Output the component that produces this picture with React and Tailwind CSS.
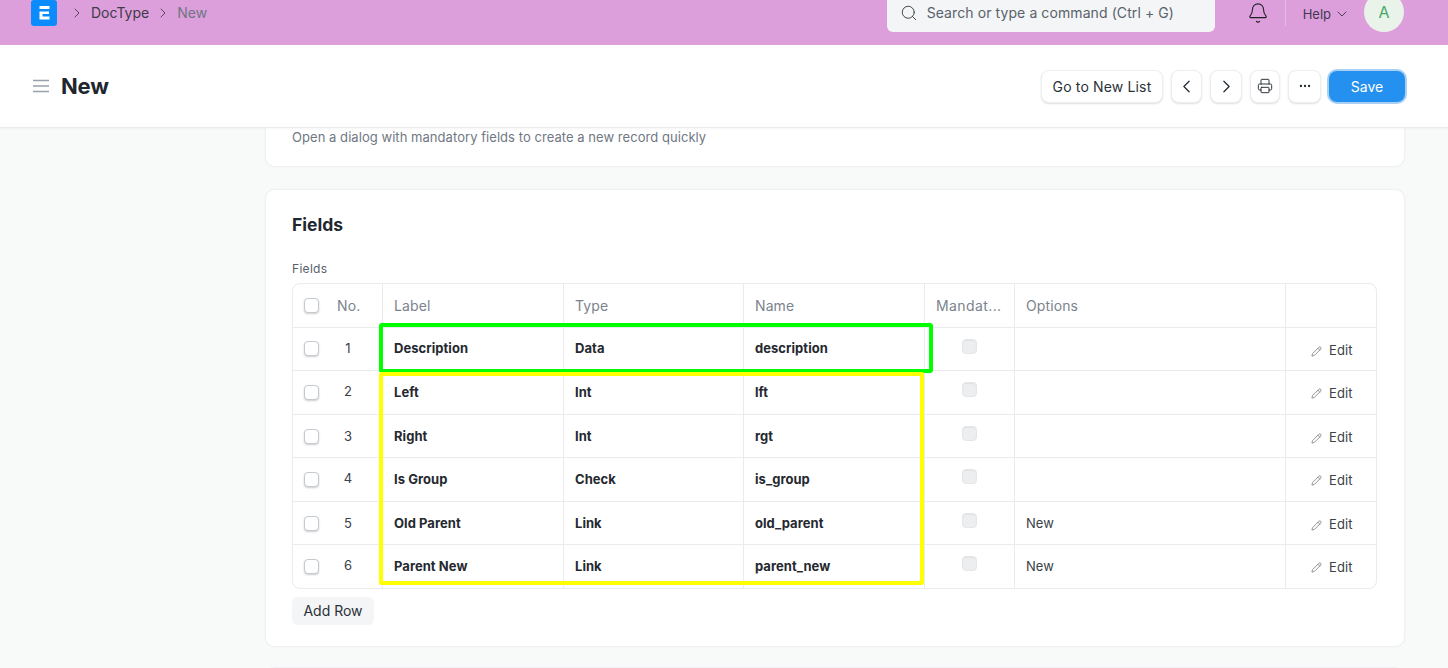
import React from "react";
import { ChevronRight, ChevronLeft, ChevronDown, Search, Bell, Printer, Ellipsis, Pencil } from "lucide-react";

const rows = [
  ["1", "Description", "Data", "description", "", false],
  ["2", "Left", "Int", "lft", "", false],
  ["3", "Right", "Int", "rgt", "", true],
  ["4", "Is Group", "Check", "is_group", "", false],
  ["5", "Old Parent", "Link", "old_parent", "New", true],
  ["6", "Parent New", "Link", "parent_new", "New", false],
];

function Box({ disabled }) {
  return (
    <span
      className={
        disabled
          ? "block w-[15px] h-[15px] rounded-[4px] bg-[#edeeef] border border-[#e4e6e8] shadow-[inset_0_1px_1px_rgba(0,0,0,0.05)]"
          : "block w-[15px] h-[15px] rounded-[4px] bg-white border border-[#c5cad0] shadow-[0_1px_2px_rgba(0,0,0,0.2)]"
      }
    />
  );
}

function IconBtn({ children, w }) {
  return (
    <button className={`h-[33px] ${w} flex items-center justify-center rounded-[8px] bg-white border border-[#eceef0] shadow-[0_1px_2px_rgba(0,0,0,0.13)] text-[#1f272e]`}>
      {children}
    </button>
  );
}

export default function App() {
  return (
    <div className="w-[1448px] h-[668px] overflow-hidden bg-[#f8f9f9] font-['Inter',sans-serif] text-[#1f272e] flex flex-col">
      <div className="h-[45px] shrink-0 bg-[#dd9fdc] flex items-start pl-[31px]">
        <div className="w-[26px] h-[26px] rounded-[3px] bg-[#0a8cff] flex items-center justify-center">
          <svg width="11" height="14" viewBox="0 0 11 14">
            <path d="M0.5 0H10.5V3H0.5ZM0.5 5.5H10V8H3.5V10.5H10.5V13.5H0.5Z" fill="#fff" />
          </svg>
        </div>
        <ChevronRight size={16} strokeWidth={1.2} className="ml-[12px] mt-[5px] text-[#35323c]" />
        <span className="ml-[6px] mt-[5px] text-[14px] leading-[16px] text-[#3f3a46]">DocType</span>
        <ChevronRight size={16} strokeWidth={1.2} className="ml-[6px] mt-[5px] text-[#35323c]" />
        <span className="ml-[6px] mt-[5px] text-[14px] leading-[16px] text-[#6f7583]">New</span>

        <div className="ml-auto flex items-start">
          <div className="w-[328px] h-[32px] bg-[#f4f5f6] rounded-b-[6px] flex items-start pl-[13px]">
            <Search size={18} strokeWidth={1.3} className="mt-[4px] text-[#3d444c]" />
            <span className="ml-[9px] mt-[5px] text-[14px] leading-[16px] tracking-[0.09px] text-[#59626b]">Search or type a command (Ctrl + G)</span>
          </div>
          <Bell size={22} strokeWidth={1.2} className="ml-[32px] mt-[2px] text-[#1d1f24]" />
          <div className="ml-[16px] w-px h-[26px] bg-[#e3bde2]" />
          <span className="ml-[17px] mt-[6px] text-[13px] leading-[16px] text-[#3f3a52]">Help</span>
          <ChevronDown size={16} strokeWidth={1.4} className="ml-[3px] mt-[6px] text-[#3f3a52]" />
          <div className="ml-[14px] mr-[44px] -mt-[8px] w-[40px] h-[40px] rounded-full bg-[#e9f3ea] flex items-center justify-center text-[16px] text-[#48a868]">A</div>
        </div>
      </div>

      <div className="h-[83px] shrink-0 bg-white border-b border-[#e9ebec] shadow-[0_1px_2px_rgba(0,0,0,0.04)] flex items-center pl-[33px] pr-[43px] relative z-10">
        <svg width="16" height="14" viewBox="0 0 16 14" className="text-[#99a1a9]">
          <path d="M0 1.5H16M0 7H16M0 12.5H16" stroke="currentColor" strokeWidth="1.4" fill="none" />
        </svg>
        <h1 className="ml-[12px] text-[22px] leading-[28px] font-bold tracking-[-0.2px] text-[#1f272e]">New</h1>
        <div className="ml-auto flex items-center">
          <button className="h-[33px] w-[122px] rounded-[8px] bg-white border border-[#eceef0] shadow-[0_1px_2px_rgba(0,0,0,0.13)] text-[14px] tracking-[0.15px] text-[#2b3138]">Go to New List</button>
          <div className="ml-[8px]"><IconBtn w="w-[31px]"><ChevronLeft size={21} strokeWidth={1.4} /></IconBtn></div>
          <div className="ml-[8px]"><IconBtn w="w-[32px]"><ChevronRight size={21} strokeWidth={1.4} /></IconBtn></div>
          <div className="ml-[8px]"><IconBtn w="w-[30px]"><Printer size={16} strokeWidth={1.4} /></IconBtn></div>
          <div className="ml-[8px]"><IconBtn w="w-[33px]"><Ellipsis size={14} strokeWidth={2} /></IconBtn></div>
          <button className="ml-[8px] h-[31px] w-[76px] rounded-[8px] bg-[#2490ef] text-white text-[14px] ring-2 ring-[#a8d0f5]">Save</button>
        </div>
      </div>

      <div className="flex-1 pl-[265px] pr-[43px] flex flex-col min-h-0">
        <div className="h-[39px] shrink-0 bg-white border border-t-0 border-[#f0f1f2] rounded-b-[10px] shadow-[0_0_2px_rgba(0,0,0,0.05)] pl-[26px] pt-[1px] text-[13px] leading-[17px] tracking-[0.05px] text-[#6f7883]">
          Open a dialog with mandatory fields to create a new record quickly
        </div>

        <div className="mt-[22px] h-[458px] shrink-0 bg-white border border-[#f0f1f2] rounded-[10px] shadow-[0_0_2px_rgba(0,0,0,0.05)] pl-[26px] pr-[27px] pt-[24px]">
          <h2 className="text-[17.5px] leading-[22px] font-bold text-[#1f272e]">Fields</h2>
          <div className="mt-[25px] text-[12px] leading-[16px] tracking-[0.3px] text-[#56606a]">Fields</div>

          <div className="relative mt-[6px] w-[1085px] border border-[#e9ebed] rounded-[8px] text-[13px]">
            <div className="grid grid-cols-[90px_181px_180px_181px_90px_271px_90px] h-[44px] text-[14px] tracking-[0.1px] text-[#7b838c] border-b border-[#e9ebed]">
              <div className="flex items-center pl-[11px] border-r border-[#e9ebed]">
                <Box />
                <span className="ml-[18px]">No.</span>
              </div>
              <div className="flex items-center pl-[11px] border-r border-[#e9ebed]">Label</div>
              <div className="flex items-center pl-[11px] border-r border-[#e9ebed]">Type</div>
              <div className="flex items-center pl-[11px] border-r border-[#e9ebed]">Name</div>
              <div className="flex items-center pl-[11px] border-r border-[#e9ebed] tracking-[0.4px]">Mandat...</div>
              <div className="flex items-center pl-[11px] border-r border-[#e9ebed]">Options</div>
              <div />
            </div>
            {rows.map(([n, label, type, name, options, lower], i) => {
              const cell = `flex items-center pl-[11px] border-r border-[#e9ebed] ${lower ? "pt-[2px]" : ""}`;
              const strong = `${cell} font-bold tracking-[0.05px] text-[#25292f]`;
              return (
                <div
                  key={n}
                  className={`grid grid-cols-[90px_181px_180px_181px_90px_271px_90px] ${i % 2 === 0 || i === 5 ? "h-[43px]" : "h-[44px]"} ${i < 5 ? "border-b border-[#e9ebed]" : ""}`}
                >
                  <div className={`flex items-center pl-[11px] border-r border-[#e9ebed] ${lower ? "pt-[1px]" : "pb-[1px]"}`}>
                    <Box />
                    <span className="w-[18px] ml-[20px] text-center text-[#3a4149]">{n}</span>
                  </div>
                  <div className={strong}>{label}</div>
                  <div className={strong}>{type}</div>
                  <div className={strong}>{name}</div>
                  <div className="flex justify-center pt-[11px] border-r border-[#e9ebed]"><Box disabled /></div>
                  <div className={`${cell} text-[#3a4149]`}>{options}</div>
                  <div className={`flex items-center pl-[25px] text-[#3a4149] ${i % 2 === 0 ? "pt-[4px]" : "pt-[2px]"}`}>
                    <Pencil size={11} strokeWidth={1.2} />
                    <span className="ml-[7px] tracking-[0.1px]">Edit</span>
                  </div>
                </div>
              );
            })}

            <div className="absolute left-[86px] top-[39px] w-[554px] h-[50px] border-[4px] border-[#00ff00] rounded-[3px] pointer-events-none" />
            <div className="absolute left-[86px] top-[88px] w-[545px] h-[213px] border-[4px] border-[#ffff00] rounded-[2px] pointer-events-none" />
          </div>

          <button className="mt-[8px] w-[82px] h-[28px] pb-[2px] rounded-[6px] bg-[#f4f5f6] text-[14px] text-[#2b3138]">Add Row</button>
        </div>

        <div className="mt-[20px] h-[40px] shrink-0 bg-white border border-[#f0f1f2] rounded-t-[10px]" />
      </div>
    </div>
  );
}
